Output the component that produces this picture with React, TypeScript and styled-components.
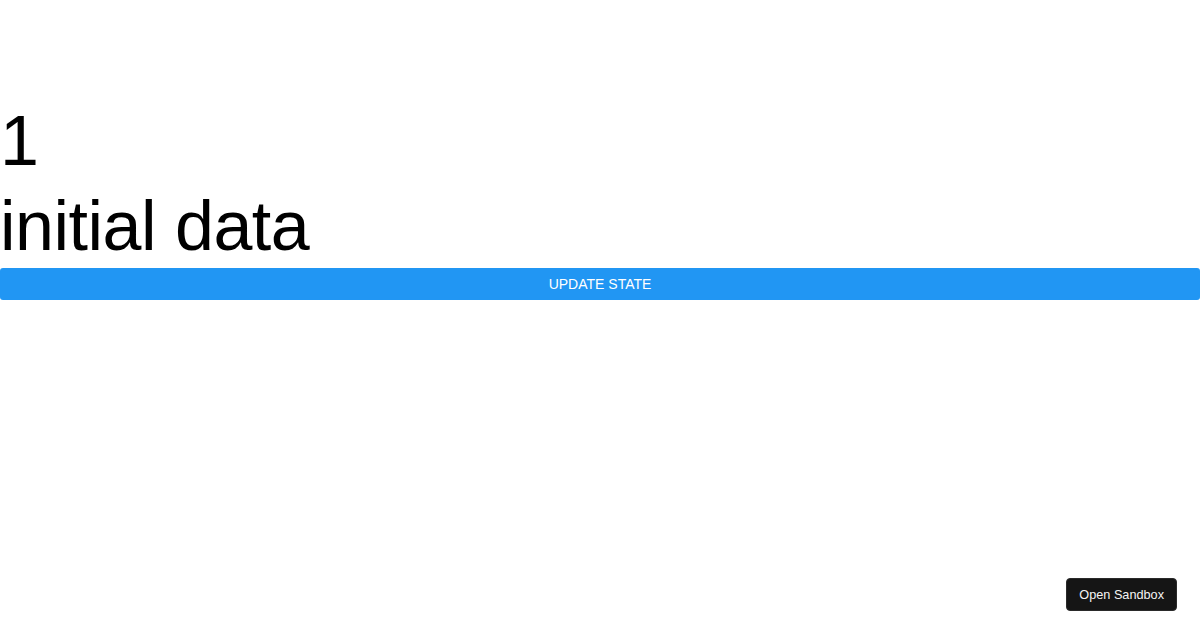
import React, { useState } from "react";
import styled, { createGlobalStyle } from "styled-components";

const GlobalStyle = createGlobalStyle`
  html, body {
    margin: 0;
    padding: 0;
    background: #fff;
  }
  body {
    font-family: "Liberation Sans", Arial, sans-serif;
  }
`;

const Page = styled.div`
  padding-top: 99px;
  min-height: 630px;
  box-sizing: border-box;
`;

const BigLine = styled.div`
  font-size: 70px;
  line-height: 85px;
  letter-spacing: -0.5px;
  color: #000;
  &:last-of-type {
    line-height: 84px;
  }
`;

const UpdateButton = styled.button`
  display: block;
  width: 100%;
  height: 32px;
  border: none;
  border-radius: 3px;
  background: #2196f3;
  color: #fff;
  font-family: "Liberation Sans", Arial, sans-serif;
  font-size: 14px;
  text-transform: uppercase;
  cursor: pointer;
`;

const SandboxButton = styled.a`
  position: fixed;
  right: 23px;
  bottom: 19px;
  display: flex;
  align-items: center;
  height: 33px;
  padding: 0 12px;
  border-radius: 4px;
  background: #151515;
  color: #f4f4f4;
  font-size: 12.7px;
  text-decoration: none;
  border: 1px solid #2a2a2a;
  box-sizing: border-box;
`;

export default function App() {
  const [count, setCount] = useState(1);
  const [data, setData] = useState("initial data");

  return (
    <>
      <GlobalStyle />
      <Page>
        <BigLine>{count}</BigLine>
        <BigLine>{data}</BigLine>
        <UpdateButton
          onClick={() => {
            setCount((c) => c + 1);
            setData("updated data");
          }}
        >
          Update State
        </UpdateButton>
      </Page>
      <SandboxButton href="#">Open Sandbox</SandboxButton>
    </>
  );
}
